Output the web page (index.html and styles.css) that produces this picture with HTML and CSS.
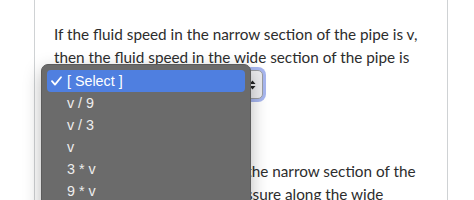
FILE: index.html
```html
<!DOCTYPE html>
<html>
<head>
<meta charset="utf-8">
<link rel="stylesheet" href="styles.css">
</head>
<body>
<div class="card">
  <p class="q">If the fluid speed in the narrow section of the pipe is v,<br>then the fluid speed in the wide section of the pipe is</p>
  <div class="select">
    <span class="spin">
      <svg width="7" height="10" viewBox="0 0 7 10"><path d="M3.5 0.5 L6.5 4 L0.5 4 Z M3.5 9.5 L6.5 6 L0.5 6 Z" fill="#222"/></svg>
    </span>
  </div>
  <p class="q q2">If the fluid pressure is P/2 in the narrow section of the<br>pipe, so, what is the fluid pressure along the wide</p>
</div>
<div class="menu">
  <div class="opt sel">
    <svg class="check" width="11" height="10" viewBox="0 0 11 10"><path d="M1 5.2 L4 8.6 L10 1.2" fill="none" stroke="#fff" stroke-width="1.8" stroke-linecap="round" stroke-linejoin="round"/></svg>
    [ Select ]
  </div>
  <div class="opt">v / 9</div>
  <div class="opt">v / 3</div>
  <div class="opt">v</div>
  <div class="opt">3 * v</div>
  <div class="opt">9 * v</div>
</div>
</body>
</html>
```
FILE: styles.css
```css
html, body {
  margin: 0;
  padding: 0;
  background: #fff;
  overflow: hidden;
}
body {
  width: 474px;
  height: 200px;
  position: relative;
}
.card {
  margin-left: 34px;
  width: 414px;
  height: 200px;
  box-sizing: border-box;
  border-left: 1px solid #cfd2d4;
  border-right: 1px solid #cfd2d4;
  padding: 23px 0 0 19px;
  font-family: Lato, "Noto Sans", sans-serif;
  font-size: 15.3px;
  color: #2d2d2d;
}
.q {
  margin: 0;
  line-height: 23px;
}
.q2 {
  margin-top: 61px;
}
.select {
  margin-top: 1px;
  width: 209px;
  height: 29px;
  box-sizing: border-box;
  border: 1px solid #9a9ca0;
  border-radius: 5px;
  background: #ececef;
  box-shadow: 0 0 0 3px #a7b6ef;
  display: flex;
  justify-content: flex-end;
  align-items: center;
  padding-right: 6px;
}
.spin {
  display: flex;
}
.menu {
  position: absolute;
  left: 41px;
  top: 64px;
  width: 210px;
  height: 170px;
  box-sizing: border-box;
  padding: 5px;
  background: #6b6b6b;
  border: 1px solid #5c5c5c;
  border-radius: 7px;
  box-shadow: 0 6px 18px rgba(0, 0, 0, 0.28);
  font-family: "Liberation Sans", Arial, sans-serif;
  font-size: 14.3px;
  color: #eeeeee;
}
.opt {
  height: 22px;
  line-height: 22px;
  padding-left: 20px;
  position: relative;
  border-radius: 4px;
}
.opt.sel {
  background: #4f7fe0;
  color: #fff;
}
.check {
  position: absolute;
  left: 4px;
  top: 6px;
}
```
